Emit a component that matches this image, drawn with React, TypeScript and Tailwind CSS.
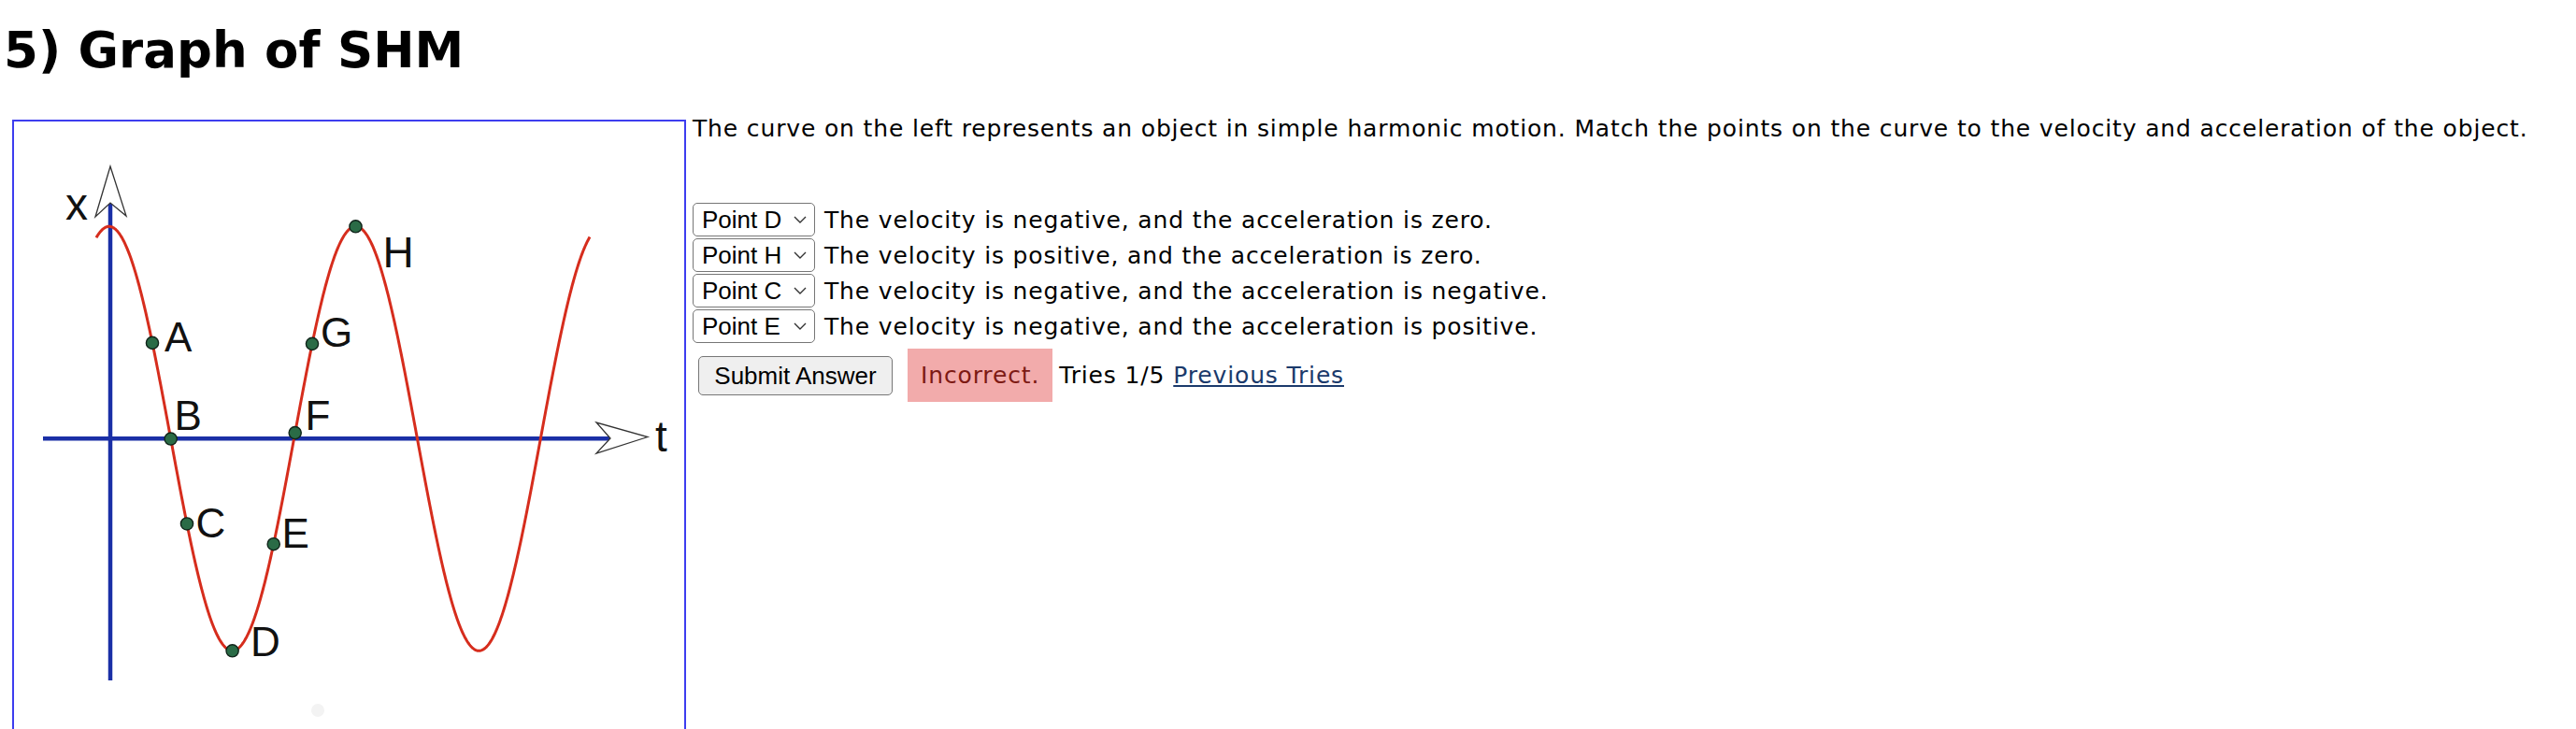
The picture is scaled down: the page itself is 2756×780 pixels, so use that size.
import React from "react";

const PERIOD = 263.8;
const PHASE = 116.7;
const AMP = 227;
const CY = 469.3;
const fy = (x: number) => CY - AMP * Math.cos((2 * Math.PI * (x - PHASE)) / PERIOD);

const curvePath = (() => {
  let d = "";
  for (let x = 103; x <= 631; x += 1) {
    d += (x === 103 ? "M" : "L") + x + " " + fy(x).toFixed(2) + " ";
  }
  return d;
})();

const dots: { x: number }[] = [
  { x: 163 },
  { x: 182.7 },
  { x: 200 },
  { x: 248.6 },
  { x: 292.7 },
  { x: 315.7 },
  { x: 334 },
  { x: 380.5 },
];

const labels: { t: string; x: number; y: number; s: number }[] = [
  { t: "x", x: 70, y: 235, s: 48 },
  { t: "A", x: 176, y: 376, s: 44 },
  { t: "B", x: 186.5, y: 460, s: 44 },
  { t: "C", x: 209.5, y: 575, s: 44 },
  { t: "D", x: 268, y: 702, s: 44 },
  { t: "E", x: 301.5, y: 586, s: 44 },
  { t: "F", x: 326.5, y: 460, s: 44 },
  { t: "G", x: 343, y: 371, s: 44 },
  { t: "H", x: 409.5, y: 286, s: 46 },
  { t: "t", x: 701, y: 483, s: 46 },
];

function Graph() {
  return (
    <svg width={717} height={650} viewBox="15 130 717 650" className="block">
      <circle cx={340} cy={760} r={7} fill="#f3f3f3" />
      <line x1={118} y1={217} x2={118} y2={728} stroke="#1a2fa6" strokeWidth={4.5} />
      <line x1={46} y1={469.3} x2={654} y2={469.3} stroke="#1a2fa6" strokeWidth={4.5} />
      <polygon
        points="118,178 135,231 118,217 102,232"
        fill="#ffffff"
        stroke="#333333"
        strokeWidth={1.3}
        strokeLinejoin="miter"
      />
      <polygon
        points="693,467.5 638,485 653,469 638,452"
        fill="#ffffff"
        stroke="#333333"
        strokeWidth={1.3}
        strokeLinejoin="miter"
      />
      <path d={curvePath} fill="none" stroke="#d62d1d" strokeWidth={3} strokeLinejoin="round" />
      {dots.map((d, i) => (
        <circle key={i} cx={d.x} cy={fy(d.x)} r={6.6} fill="#2a6b46" stroke="#10241a" strokeWidth={1.4} />
      ))}
      {labels.map((l, i) => (
        <text
          key={i}
          x={l.x}
          y={l.y}
          fontSize={l.s}
          fill="#111111"
          style={{ fontFamily: '"Liberation Sans", Arial, sans-serif' }}
        >
          {l.t}
        </text>
      ))}
    </svg>
  );
}

function Chevron() {
  return (
    <svg width={14} height={8} viewBox="0 0 14 8" className="block">
      <polyline points="1,1 7,7 13,1" fill="none" stroke="#333333" strokeWidth={1.4} />
    </svg>
  );
}

function SelectBox({ value }: { value: string }) {
  return (
    <div className="w-[131px] h-[36px] shrink-0 border border-[#767676] rounded-[5px] bg-white flex items-center justify-between pl-[9px] pr-[8px] font-['Liberation_Sans',Arial,sans-serif] text-[26px] leading-none tracking-normal text-black">
      <span>{value}</span>
      <Chevron />
    </div>
  );
}

const rows: { p: string; t: string }[] = [
  { p: "Point D", t: "The velocity is negative, and the acceleration is zero." },
  { p: "Point H", t: "The velocity is positive, and the acceleration is zero." },
  { p: "Point C", t: "The velocity is negative, and the acceleration is negative." },
  { p: "Point E", t: "The velocity is negative, and the acceleration is positive." },
];

export default function App() {
  return (
    <div className="w-[2756px] h-[780px] overflow-hidden bg-white text-black">
      <h1 className="pl-[4px] pt-[22px] text-[53px] leading-[64px] font-bold font-['DejaVu_Sans',Verdana,sans-serif] whitespace-nowrap">
        5) Graph of SHM
      </h1>
      <div className="flex items-start mt-[42px]">
        <div className="ml-[13px] w-[721px] h-[700px] shrink-0 border-2 border-[#3d3def] overflow-hidden">
          <Graph />
        </div>
        <div className="ml-[7px] -mt-[5px] font-['DejaVu_Sans',Verdana,sans-serif] text-[25px] leading-[29px] tracking-[0.85px] whitespace-nowrap">
          <p>
            The curve on the left represents an object in simple harmonic motion. Match the points on the curve to the
            velocity and acceleration of the object.
          </p>
          <div className="mt-[65px] flex flex-col gap-[2px]">
            {rows.map((r) => (
              <div key={r.p} className="flex items-center h-[36px]">
                <SelectBox value={r.p} />
                <span className="ml-[10px]">{r.t}</span>
              </div>
            ))}
          </div>
          <div className="mt-[6px] flex items-center h-[57px]">
            <button
              type="button"
              className="ml-[6px] w-[208px] h-[42px] shrink-0 bg-[#efefef] border border-[#767676] rounded-[5px] font-['Liberation_Sans',Arial,sans-serif] text-[26px] leading-none tracking-normal text-black flex items-center justify-center"
            >
              Submit Answer
            </button>
            <span className="ml-[16px] h-[57px] px-[14px] bg-[#f2abab] text-[#7d1a14] flex items-center">
              Incorrect.
            </span>
            <span className="ml-[7px]">Tries 1/5</span>
            <a href="#" className="ml-[9px] text-[#1b3a6b] underline">
              Previous Tries
            </a>
          </div>
        </div>
      </div>
    </div>
  );
}
